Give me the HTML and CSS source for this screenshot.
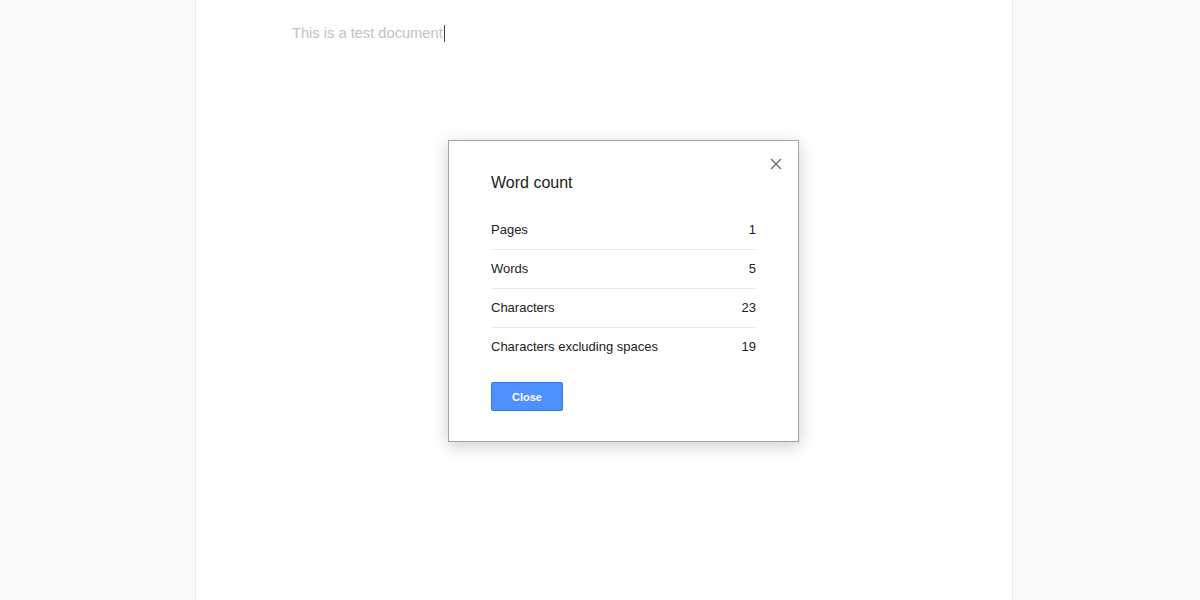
FILE: index.html
```html
<!DOCTYPE html>
<html>
<head>
<meta charset="utf-8">
<link rel="stylesheet" href="styles.css">
</head>
<body>
<div class="canvas">
  <div class="page">
    <p class="doc-line">This is a test document<span class="cursor"></span></p>
  </div>
  <div class="dialog">
    <button class="close-x" aria-label="Close">
      <svg width="12" height="12" viewBox="0 0 12 12"><path d="M1 1L11 11M11 1L1 11" stroke="#6f6f6f" stroke-width="1.4" fill="none"/></svg>
    </button>
    <h2 class="title">Word count</h2>
    <div class="rows">
      <div class="row"><span>Pages</span><span>1</span></div>
      <div class="row"><span>Words</span><span>5</span></div>
      <div class="row"><span>Characters</span><span>23</span></div>
      <div class="row"><span>Characters excluding spaces</span><span>19</span></div>
    </div>
    <button class="btn">Close</button>
  </div>
</div>
</body>
</html>
```

FILE: styles.css
```css
html, body {
  margin: 0;
  padding: 0;
  height: 100%;
  background: #f9f9f9;
  font-family: Arial, "Liberation Sans", sans-serif;
}
.canvas {
  position: relative;
  height: 600px;
  overflow: hidden;
}
.page {
  margin-left: 195px;
  width: 818px;
  height: 600px;
  background: #fff;
  border-left: 1px solid #ececec;
  border-right: 1px solid #ececec;
  padding: 25px 0 0 96px;
  box-sizing: border-box;
}
.doc-line {
  margin: 0;
  font-size: 14.67px;
  line-height: 17px;
  color: #c2c2c2;
  display: flex;
  align-items: center;
}
.cursor {
  display: inline-block;
  width: 1px;
  height: 17px;
  background: #444;
  margin-left: 1px;
}
.dialog {
  position: absolute;
  left: 448px;
  top: 140px;
  width: 351px;
  box-sizing: border-box;
  background: #fff;
  border: 1px solid #a3a3a3;
  box-shadow: 0 4px 16px rgba(0, 0, 0, 0.2);
  padding: 32px 42px 30px 42px;
}
.close-x {
  position: absolute;
  top: 17px;
  right: 16px;
  width: 12px;
  height: 12px;
  padding: 0;
  border: 0;
  background: none;
  display: flex;
}
.title {
  margin: 0 0 18px 0;
  font-size: 16px;
  font-weight: normal;
  line-height: 20px;
  color: #222;
}
.rows {
  display: flex;
  flex-direction: column;
}
.row {
  display: flex;
  justify-content: space-between;
  font-size: 13px;
  line-height: 16px;
  color: #222;
  padding: 11px 0;
  border-bottom: 1px solid #ebebeb;
}
.row:last-child {
  border-bottom: 0;
}
.btn {
  margin-top: 16px;
  width: 72px;
  height: 29px;
  background: #4d90fe;
  border: 1px solid #3079ed;
  border-radius: 2px;
  color: #fff;
  font-family: Arial, "Liberation Sans", sans-serif;
  font-size: 11px;
  font-weight: bold;
  padding: 0;
}
```
